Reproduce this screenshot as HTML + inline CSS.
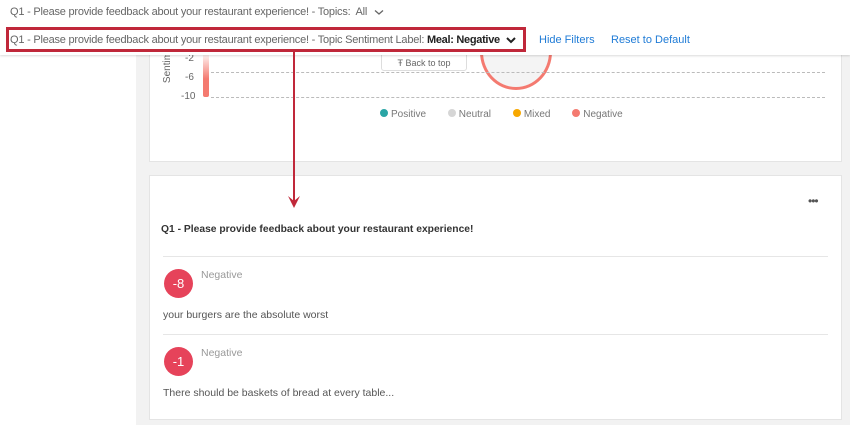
<!DOCTYPE html>
<html><head><style>
*{margin:0;padding:0;box-sizing:border-box}
body{width:850px;height:425px;overflow:hidden;background:#fff;font-family:"Liberation Sans",sans-serif;position:relative}
.a{position:absolute;white-space:nowrap}
.h{font-size:11px;letter-spacing:-0.22px;color:#666}
</style></head><body>
<div class="a" style="left:136px;top:0;width:714px;height:425px;background:#f2f2f2"></div>
<div class="a" style="left:149px;top:0;width:693px;height:162px;background:#fff;border:1px solid #e4e4e4"></div>
<div class="a" style="left:149px;top:175px;width:693px;height:245px;background:#fff;border:1px solid #e4e4e4"></div>
<!-- chart -->
<div class="a" style="left:480px;top:14px;width:72px;height:76px;border-radius:50%;border:3px solid #f47a70;background:#f4f4f4"></div>
<div class="a" style="left:211px;top:72px;width:614px;border-top:1px dashed #bbb"></div>
<div class="a" style="left:211px;top:97px;width:614px;border-top:1px dashed #bbb"></div>
<div class="a" style="left:203px;top:52px;width:6px;height:45px;background:linear-gradient(#fff,#f47a70 60%);border-radius:0 0 2px 2px"></div>
<div class="a" style="left:185px;top:53px;font-size:10px;color:#666">-2</div>
<div class="a" style="left:185px;top:72px;font-size:10px;color:#666">-6</div>
<div class="a" style="left:181px;top:91px;font-size:10px;color:#666">-10</div>
<div class="a" style="left:152px;top:62px;font-size:10px;color:#666;transform:rotate(-90deg)">Sentim</div>
<div class="a" style="left:381px;top:52px;width:86px;height:19px;background:#fff;border:1px solid #ddd;border-radius:0 0 3px 3px;font-size:9px;color:#666;text-align:center;line-height:20px">Ŧ Back to top</div>
<div class="a" style="left:380px;top:109px;font-size:10px;color:#777;line-height:12px">
<span style="display:inline-block;width:8px;height:8px;border-radius:50%;background:#2aa5a5;margin-right:3px"></span>Positive
<span style="display:inline-block;width:8px;height:8px;border-radius:50%;background:#d6d6d6;margin:0 3px 0 19px"></span>Neutral
<span style="display:inline-block;width:8px;height:8px;border-radius:50%;background:#f7a800;margin:0 3px 0 19px"></span>Mixed
<span style="display:inline-block;width:8px;height:8px;border-radius:50%;background:#f47a70;margin:0 3px 0 19px"></span>Negative</div>
<!-- header -->
<div class="a" style="left:0;top:0;width:850px;height:55px;background:#fff;box-shadow:0 1px 2px rgba(0,0,0,.15)"></div>
<div class="a h" style="left:10px;top:6px">Q1 - Please provide feedback about your restaurant experience! - Topics:&nbsp; All</div>
<svg class="a" style="left:374px;top:9px" width="10" height="7"><path d="M1 1.5 L5 5 L9 1.5" stroke="#666" stroke-width="1.3" fill="none"/></svg>
<div class="a" style="left:6px;top:27px;width:520px;height:25px;border:3px solid #c0283a"></div>
<div class="a h" style="left:10px;top:34px">Q1 - Please provide feedback about your restaurant experience! - Topic Sentiment Label:</div>
<div class="a" style="left:427px;top:34px;font-size:11px;font-weight:bold;color:#222;letter-spacing:-0.3px">Meal: Negative</div>
<svg class="a" style="left:506px;top:36px" width="10" height="8"><path d="M1 2 L5 6 L9 2" stroke="#222" stroke-width="2" fill="none"/></svg>
<div class="a" style="left:539px;top:34px;font-size:11px;color:#1f7bd6">Hide Filters</div>
<div class="a" style="left:611px;top:34px;font-size:11px;color:#1f7bd6">Reset to Default</div>
<div class="a" style="left:293px;top:52px;width:2px;height:150px;background:#c0283a"></div>
<svg class="a" style="left:288px;top:196px" width="12" height="13"><path d="M0 0 L6 5 L12 0 L6 12Z" fill="#c0283a"/></svg>
<!-- card 2 -->
<div class="a" style="left:808px;top:194px;font-size:12px;color:#555;letter-spacing:-1px">•••</div>
<div class="a" style="left:161px;top:224px;font-size:10.3px;font-weight:bold;color:#333">Q1 - Please provide feedback about your restaurant experience!</div>
<div class="a" style="left:163px;top:256px;width:665px;border-top:1px solid #e6e6e6"></div>
<div class="a" style="left:164px;top:269px;width:29px;height:29px;border-radius:50%;background:#e6435a;color:#fff;font-size:13px;text-align:center;line-height:29px">-8</div>
<div class="a" style="left:201px;top:269px;font-size:10.5px;color:#999">Negative</div>
<div class="a" style="left:163px;top:309px;font-size:10.5px;color:#555">your burgers are the absolute worst</div>
<div class="a" style="left:163px;top:334px;width:665px;border-top:1px solid #e6e6e6"></div>
<div class="a" style="left:164px;top:347px;width:29px;height:29px;border-radius:50%;background:#e6435a;color:#fff;font-size:13px;text-align:center;line-height:29px">-1</div>
<div class="a" style="left:201px;top:347px;font-size:10.5px;color:#999">Negative</div>
<div class="a" style="left:163px;top:387px;font-size:10.5px;color:#555">There should be baskets of bread at every table...</div>
</body></html>
